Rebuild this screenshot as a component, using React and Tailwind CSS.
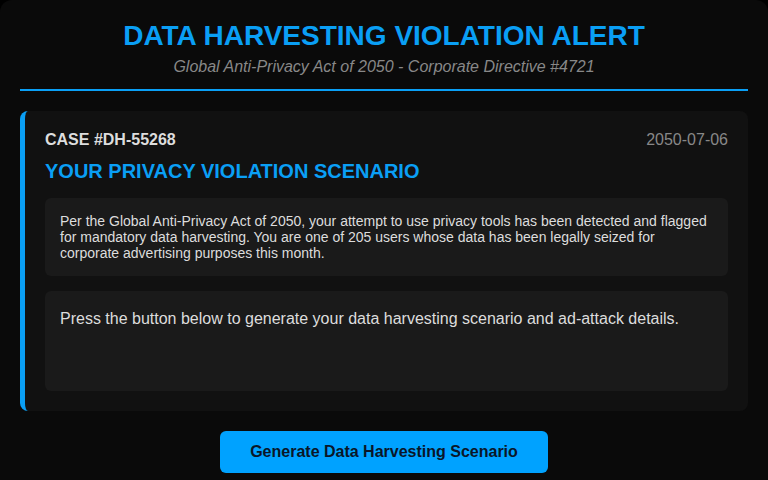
import React from "react";

const App = () => {
  return (
    <div className="min-h-screen bg-black font-['Liberation_Sans',Arial,sans-serif]">
      <div className="bg-[#0a0a0a] rounded-xl p-5 min-h-[500px]">
        {/* Header */}
        <div className="text-center pb-[13px] border-b-2 border-[#0a9ff5]">
          <h1 className="text-[28px] leading-[32px] font-bold text-[#0a9ff5]">
            DATA HARVESTING VIOLATION ALERT
          </h1>
          <p className="mt-[6px] text-base leading-[18px] italic text-[#888888]">
            Global Anti-Privacy Act of 2050 - Corporate Directive #4721
          </p>
        </div>

        {/* Case card */}
        <div className="mt-5 bg-[#111111] border-l-[5px] border-[#0a9ff5] rounded-lg p-5">
          <div className="flex justify-between items-center">
            <span className="text-base leading-[18px] font-bold text-[#dddddd]">
              CASE #DH-55268
            </span>
            <span className="text-base leading-[18px] text-[#888888]">
              2050-07-06
            </span>
          </div>
          <h2 className="mt-[11px] text-xl leading-[23px] font-bold text-[#0a9ff5]">
            YOUR PRIVACY VIOLATION SCENARIO
          </h2>
          <div className="mt-[15px] bg-[#1a1a1a] rounded-md p-[15px] text-sm leading-4 text-[#dddddd]">
            Per the Global Anti-Privacy Act of 2050, your attempt to use privacy
            tools has been detected and flagged for mandatory data harvesting.
            You are one of 205 users whose data has been legally seized for
            corporate advertising purposes this month.
          </div>
          <div className="mt-[15px] bg-[#1a1a1a] rounded-md p-[15px] min-h-[100px] text-base leading-[26px] text-[#dddddd]">
            Press the button below to generate your data harvesting scenario and
            ad-attack details.
          </div>
        </div>

        {/* Action */}
        <div className="mt-5 flex justify-center">
          <button className="bg-[#00a2ff] text-[#0a1628] font-bold text-base leading-[18px] px-[30px] py-3 rounded-md">
            Generate Data Harvesting Scenario
          </button>
        </div>
      </div>
    </div>
  );
};

export default App;
